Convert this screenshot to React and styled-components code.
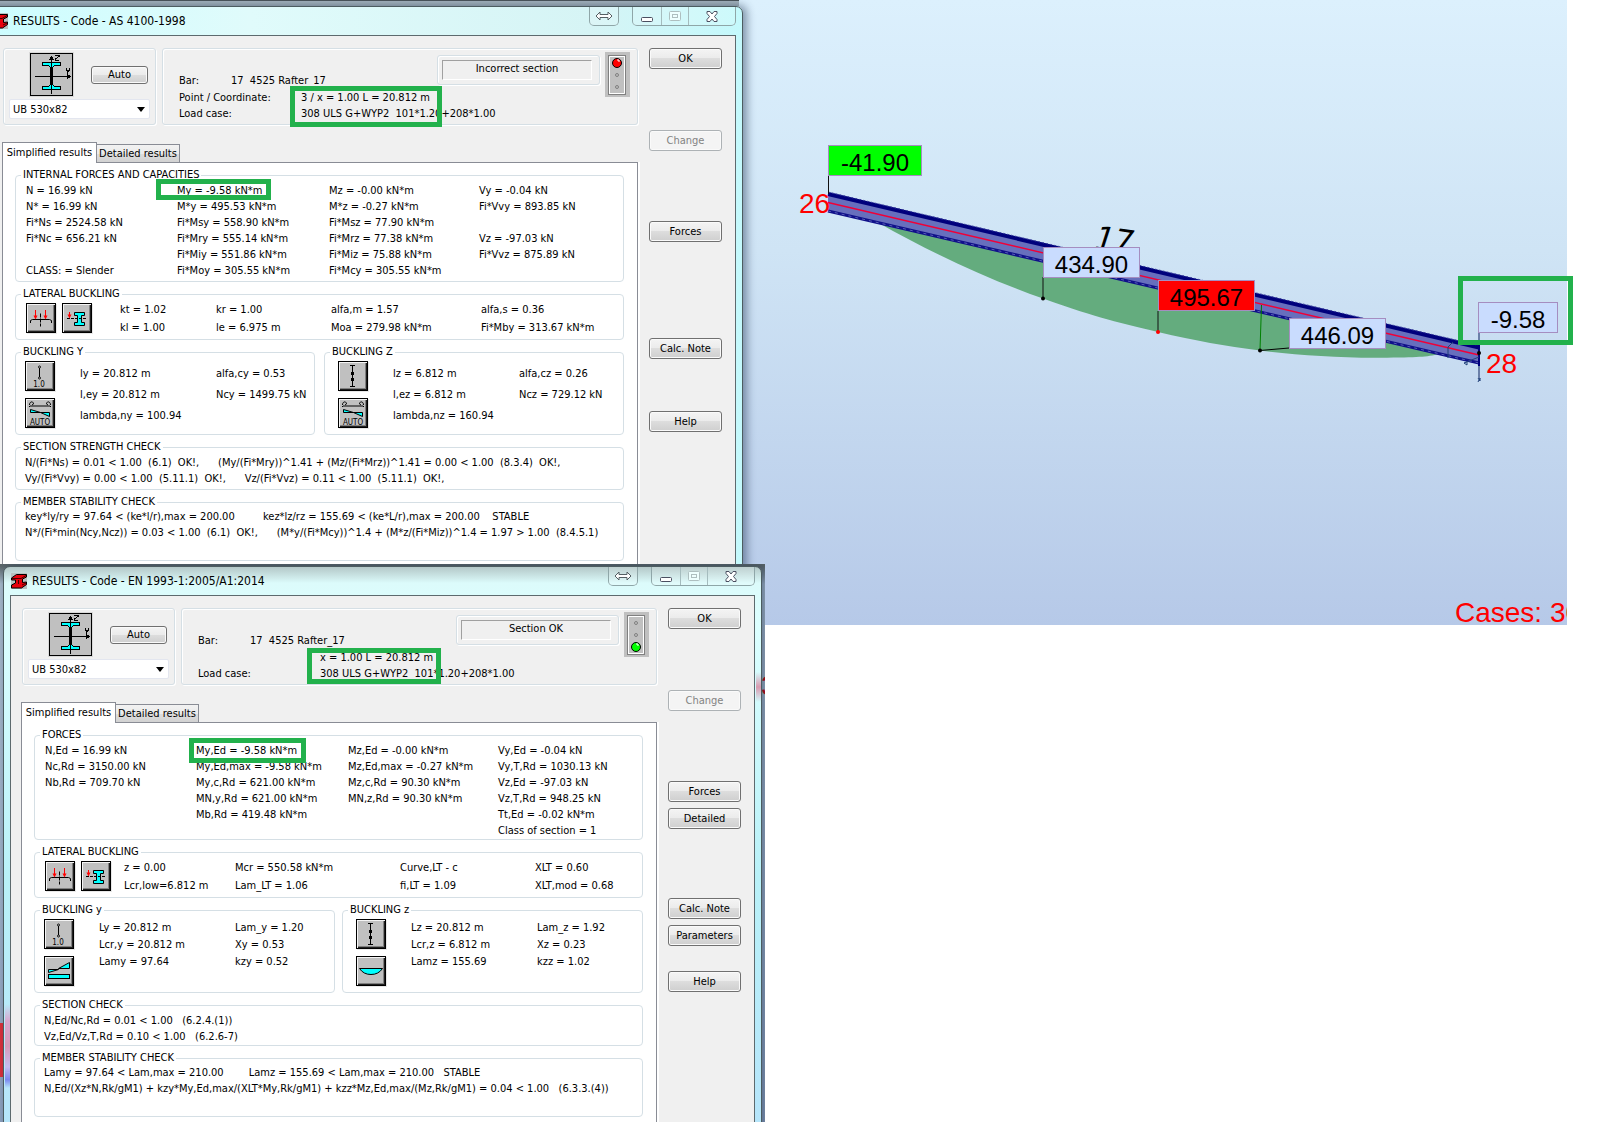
import React from "react";
import styled, { createGlobalStyle, css } from "styled-components";

const GlobalStyle = createGlobalStyle`
  *, *::before, *::after { box-sizing: border-box; }
  body { margin: 0; background: #fff; }
`;

const dialogFont = css`
  font-family: "DejaVu Sans Condensed", "DejaVu Sans", sans-serif;
  font-size: 11px;
  line-height: 16px;
  color: #000;
`;

/* ---------- canvas ---------- */

const Page = styled.main`
  ${dialogFont}
  position: relative;
  height: 100vh;
  overflow: hidden;
  white-space: pre;
`;

const UpperCapture = styled.section`
  position: absolute;
  top: 0;
  left: 0;
  right: 33px;
  height: 625px;
  overflow: hidden;
  background: linear-gradient(#dcf0fd, #cfe4f5 40%, #b6c9e8);
`;

const LowerCapture = styled.section`
  position: absolute;
  top: 564px;
  bottom: 0;
  left: 0;
  width: 765px;
  overflow: hidden;
  background: linear-gradient(#5b6669 2px, #a9bccd 20px, #9fb2c9 60%, #8fa3c0);
`;

const BehindStrip = styled.div`
  width: 739px;
  height: 6px;
  border-top: 1px solid #4b555a;
  background: #a7b6bf;
`;

const RedGlow = styled.div`
  position: absolute;
  left: ${(p) => p.$x}px;
  top: ${(p) => p.$y}px;
  width: ${(p) => p.$w}px;
  height: ${(p) => p.$h}px;
  background: ${(p) => p.$bg};
`;

const HiddenNode = styled.span`
  position: absolute;
  left: 761px;
  top: 108px;
  font: 28px/28px "Liberation Sans", Arial, sans-serif;
  color: #c8000a;
`;

const Highlight = styled.div`
  position: absolute;
  left: ${(p) => p.$x}px;
  top: ${(p) => p.$y}px;
  width: ${(p) => p.$w}px;
  height: ${(p) => p.$h}px;
  border: 5px solid #22b14c;
  pointer-events: none;
`;

/* ---------- window chrome ---------- */

const Window = styled.article`
  position: absolute;
  left: ${(p) => p.$x}px;
  top: ${(p) => p.$y}px;
  width: 759px;
  min-height: 620px;
  display: flex;
  flex-direction: column;
  padding: 0 6px;
  border: 1px solid #4c5c60;
  border-radius: 7px 7px 0 0;
  background: ${(p) =>
    p.$dim
      ? "linear-gradient(#b4c8c8, #dcfbfb 16px, #dcffff 60px, #b9f1f8 50%, #b5e2fb)"
      : "linear-gradient(90deg, #ccfdff, #e0fbfb 35%, #d6f4f5 80%, #c4f9fc)"};
  box-shadow: 3px 0 9px 1px rgba(20, 40, 70, 0.45);
`;

const TitleBar = styled.header`
  display: flex;
  align-items: flex-start;
  height: 28px;
  padding-left: 1px;
`;

const Title = styled.h1`
  flex: 1;
  margin: 0;
  padding: 6px 0 0 5px;
  font-size: 12px;
  line-height: 17px;
  font-weight: 400;
`;

const TitleIcon = styled.svg`
  margin-top: 6px;
`;

const CaptionGroup = styled.div`
  display: flex;
  height: 19px;
  margin-left: 13px;
  border: 1px solid #8fa6a8;
  border-top: 0;
  border-radius: 0 0 5px 5px;
`;

const CaptionButton = styled.button`
  display: grid;
  place-items: center;
  width: ${(p) => p.$w}px;
  padding: 0;
  border: 0;
  background: rgba(255, 255, 255, 0.15);
  & + & {
    border-left: 1px solid #a5bcbe;
  }
`;

const Client = styled.div`
  flex: 1;
  display: flex;
  gap: 11px;
  padding: 12px 0 0 10px;
  border: 1px solid #5d6a6e;
  border-bottom: 0;
  background: #f0f0f0;
`;

const MainColumn = styled.div`
  flex: 0 0 636px;
  display: flex;
  flex-direction: column;
`;

const SideColumn = styled.div`
  display: flex;
  flex-direction: column;
`;

const PushButton = styled.button`
  ${dialogFont}
  width: ${(p) => p.$w || 73}px;
  height: ${(p) => p.$h || 21}px;
  margin-top: ${(p) => p.$gap || 0}px;
  padding: 0;
  border: 1px solid #707070;
  border-radius: 3px;
  background: linear-gradient(#f4f4f4, #ebebeb 49%, #dddddd 50%, #cfcfcf);
  box-shadow: inset 0 0 0 1px #fafafa;
  &:disabled {
    color: #838383;
    border-color: #adb2b5;
    background: #f4f4f4;
  }
`;

/* ---------- header groups ---------- */

const HeaderRow = styled.div`
  display: flex;
  gap: 6px;
  height: 77px;
  margin-left: 1px;
`;

const Box = styled.div`
  border: 1px solid #d5dfe5;
  border-radius: 3px;
  box-shadow: inset 1px 1px 0 #fff, 1px 1px 0 #fff;
`;

const SectionBox = styled(Box)`
  flex: 0 0 153px;
  display: flex;
  flex-direction: column;
  gap: 2px;
  padding: 3px 5px 5px;
`;

const SectionTop = styled.div`
  display: flex;
  align-items: center;
  gap: 17px;
  padding-left: 20px;
`;

const SelectWrap = styled.label`
  position: relative;
  display: block;
  svg {
    position: absolute;
    right: 5px;
    top: 8px;
    pointer-events: none;
  }
`;

const Select = styled.select`
  ${dialogFont}
  appearance: none;
  width: 100%;
  height: 20px;
  padding: 1px 3px 0;
  border: 1px solid #e3e6ef;
  border-radius: 2px;
  background: #fff;
`;

const InfoBox = styled(Box)`
  flex: 1;
  display: grid;
  grid-template-columns: 52px 70px 136px 168px 25px;
  grid-template-rows: 37px 17px 16px;
  padding: 3px 0 0 16px;
`;

const InfoCell = styled.span`
  grid-column: ${(p) => p.$col};
  grid-row: ${(p) => p.$row};
  align-self: end;
`;

const StatusBox = styled(Box)`
  grid-column: 4;
  grid-row: 1;
  height: 30px;
  margin: 3px 5px 0 0;
  padding: 4px 7px 4px 4px;
`;

const Status = styled.output`
  display: block;
  height: 20px;
  border: 1px solid #a0a0a0;
  border-right-color: #fff;
  border-bottom-color: #fff;
  text-align: center;
`;

const Traffic = styled.svg`
  grid-column: 5;
  grid-row: 1 / 3;
`;

/* ---------- tabs and groups ---------- */

const TabList = styled.div`
  display: flex;
  align-items: flex-end;
  height: 20px;
  margin-top: 17px;
`;

const Tab = styled.button`
  ${dialogFont}
  position: relative;
  padding: 0;
  border: 1px solid #898c95;
  background: ${(p) => (p.$active ? "#fff" : "linear-gradient(#f2f2f2, #ebebeb 50%, #dddddd 51%, #d2d2d2)")};
  width: ${(p) => (p.$active ? 95 : 83)}px;
  height: ${(p) => (p.$active ? 21 : 18)}px;
  margin-bottom: ${(p) => (p.$active ? -1 : 0)}px;
  border-bottom: 0;
  ${(p) => !p.$active && "border-left: 0;"}
`;

const TabPanel = styled.div`
  flex: 1;
  display: flex;
  flex-direction: column;
  gap: 5px;
  padding: 5px 13px 0 12px;
  border: 1px solid #898c95;
  border-bottom: 0;
  background: #fff;
  box-shadow: 2px 0 0 #fff;
`;

const Group = styled.fieldset`
  min-width: 0;
  min-height: ${(p) => p.$h}px;
  margin: 0;
  padding: 0 0 0 ${(p) => p.$pad || 10}px;
  border: 1px solid #d5dfe5;
  border-radius: 4px;
`;

const Legend = styled.legend`
  margin-left: ${(p) => 5 - (p.$pad || 10)}px;
  padding: 0 2px;
  line-height: 14px;
`;

const Pair = styled.div`
  display: grid;
  grid-template-columns: repeat(2, minmax(0, 1fr));
  gap: ${(p) => p.$gap}px;
`;

const Columns = styled.div`
  display: grid;
  grid-template-columns: ${(p) => p.$cols};
  line-height: ${(p) => p.$line || 16}px;
  padding-top: ${(p) => p.$top || 0}px;
`;

const Column = styled.div`
  display: flex;
  flex-direction: column;
  padding-top: ${(p) => p.$top || 0}px;
`;

const Value = styled.span`
  height: ${(p) => p.$line || 16}px;
`;

const IconSet = styled.div`
  display: flex;
  flex-direction: ${(p) => (p.$stack ? "column" : "row")};
  gap: ${(p) => (p.$stack ? 7 : 6)}px;
  padding-top: 2px;
`;

const IconButton = styled.button`
  width: 30px;
  height: 30px;
  padding: 0;
  border: 1px solid #000;
  background: #c0c0c0;
  box-shadow: inset 1px 1px 0 #f4f4f4, inset -1px -1px 0 #202020, inset -2px -2px 0 #808080, 1px 1px 0 #e8e8e8;
  svg {
    display: block;
  }
`;

/* ---------- drawings ---------- */

const SectionBitmap = () => (
  <svg width="45" height="45" viewBox="0 0 45 45" shapeRendering="crispEdges">
    <rect width="45" height="45" fill="#d9d9d9" />
    <rect x="1.500" y="1.500" width="42" height="42" fill="#c0c0c0" stroke="#000" />
    <path d="M13.500 10.500h18v3h-6l-2 2v17l2 2h6v3h-18v-3h6l2-2v-17l-2-2h-6z" fill="#00ffff" stroke="#000" />
    <path d="M22.500 5v37M6 24.500h34" stroke="#000" fill="none" />
    <path d="M20 8l2-4h1l2 4zM38 22l4 2v1l-4 2z" fill="#000" />
    <path d="M26 3.500h4v1l-4 3v1h4M37.500 16v2l1.500 2l1.500-2v-2M39 20l-1 3" stroke="#000" fill="none" />
  </svg>
);

const BeamIcon = () => (
  <TitleIcon width="16" height="16" viewBox="0 0 16 16">
    <rect width="16" height="16" fill="#b8c0c0" />
    <path d="M0.500 5l5-3.500h10v2.500l-4 2v3.500l4-0.500v2.500l-5 3.500h-10v-3l4-2v-3h-4z" fill="#e8000c" stroke="#000" />
    <path d="M1 5.500h9l5-3M7.500 7v4M11 12l4-2" stroke="#400" fill="none" />
  </TitleIcon>
);

const LightStack = ({ ok }) => (
  <Traffic width="25" height="45" viewBox="0 0 25 45">
    <rect width="25" height="45" fill="#c0c0c0" />
    <rect x="3.500" y="3.500" width="17" height="39" fill="#c0c0c0" stroke="#808080" />
    <path d="M4.500 42V4.500H20" stroke="#fff" fill="none" />
    <path d="M5 41.500h14.500V5" stroke="#fff" fill="none" />
    {[11, 23, 35].map((y, i) => {
      const lit = ok ? i === 2 : i === 0;
      return lit ? (
        <g key={y}>
          <circle cx="12" cy={y} r="4.500" fill={ok ? "#00ff00" : "#ff0000"} stroke="#000" />
          <path d={`M12 ${y - 3}h2v2`} stroke="#fff" fill="none" />
        </g>
      ) : (
        <circle key={y} cx="12" cy={y} r="1.500" fill="none" stroke="#808080" />
      );
    })}
  </Traffic>
);

const glyphs = {
  load: (
    <>
      <path d="M3.500 19v-2.500l2-1h17l2 1v2.500" stroke="#000" fill="none" />
      <path d="M13.500 9.500v13" stroke="#000" strokeDasharray="4 1" fill="none" />
      <path d="M8.500 6v8M18.500 6v8" stroke="#f00" fill="none" />
      <path d="M6.500 11.500h4l-2 4zM16.500 11.500h4l-2 4z" fill="#f00" />
    </>
  ),
  beam: (
    <>
      <path d="M11.500 8.500h10v3h-3v7h3v3h-10v-3h3v-7h-3z" fill="#00ffff" stroke="#000" />
      <path d="M4 14.500h20" stroke="#000" strokeDasharray="3 1" fill="none" />
      <path d="M6.500 8v5" stroke="#f00" fill="none" />
      <path d="M4.500 10.500h4l-2 4z" fill="#f00" />
    </>
  ),
  unit: (
    <>
      <path d="M13.500 6v10" stroke="#000" />
      <circle cx="13.500" cy="5" r="1" fill="#fff" stroke="#000" />
      <circle cx="13.500" cy="16" r="1" fill="#fff" stroke="#000" />
      <text x="13" y="25" fontSize="8" textAnchor="middle" fontFamily="DejaVu Sans Condensed, sans-serif">1.0</text>
    </>
  ),
  chain: (
    <>
      <path d="M13.500 3v22M11 3.500h5M11 24.500h5" stroke="#000" fill="none" />
      <path d="M12 10h3v3h-3zM12 16h3v3h-3z" fill="#000" />
    </>
  ),
  auto: (
    <>
      <path d="M3.500 6c0-4 4-4 4-1l-1.500 1M24.500 6c0-4-4-4-4-1l1.500 1M3 8l1-1h20l1 1" stroke="#000" fill="none" />
      <path d="M4.500 10.500v3h10zM14.500 13.500l9 4v-4z" fill="#00ffff" stroke="#000" />
      <text x="14" y="26" fontSize="8" textAnchor="middle" fontFamily="DejaVu Sans Condensed, sans-serif">AUTO</text>
    </>
  ),
  wedge: (
    <>
      <path d="M3.500 15.500v-3h10zM13.500 11.500l11-6v6z" fill="#00ffff" stroke="#000" />
      <rect x="3.500" y="17.500" width="21" height="4" fill="#00ffff" stroke="#000" />
    </>
  ),
  bowl: <path d="M2.500 11.500h23q-4 6-11.500 6t-11.500-6z" fill="#00ffff" stroke="#000" />,
};

const ToolIcon = ({ name, label }) => (
  <IconButton type="button" aria-label={label}>
    <svg width="28" height="28" viewBox="0 0 28 28">
      {glyphs[name]}
    </svg>
  </IconButton>
);

/* ---------- dialog ---------- */

const Cells = ({ columns, line, top }) =>
  columns.map((values, i) => (
    <Column key={i} $top={top}>
      {values.map((v, j) => (
        <Value key={j} $line={line}>{v}</Value>
      ))}
    </Column>
  ));

function Buckling({ data, line, top, pad, cols }) {
  return (
    <Group $h={90} $pad={pad}>
      <Legend $pad={pad}>{data.title}</Legend>
      <Columns $cols={cols} $line={line}>
        <IconSet $stack>
          <ToolIcon name={data.icons[0]} label="Buckling length" />
          <ToolIcon name={data.icons[1]} label="Load type" />
        </IconSet>
        <Cells columns={data.columns} line={line} top={top} />
      </Columns>
    </Group>
  );
}

function ResultsDialog({ x, y, dim, d }) {
  return (
    <Window $x={x} $y={y} $dim={dim}>
      <TitleBar>
        <BeamIcon />
        <Title>{d.title}</Title>
        <CaptionGroup>
          <CaptionButton $w={28} type="button" aria-label="Expand">
            <svg width="18" height="10" viewBox="0 0 18 10">
              <path d="M1 5l4-4v2.500h8V1l4 4l-4 4V6.500H5V9z" fill="#fff" stroke="#555f63" />
            </svg>
          </CaptionButton>
        </CaptionGroup>
        <CaptionGroup>
          <CaptionButton $w={28} type="button" aria-label="Minimize">
            <svg width="12" height="12" viewBox="0 0 12 12">
              <rect x="0.500" y="7.500" width="11" height="4" rx="1" fill="#fff" stroke="#4b4f60" />
            </svg>
          </CaptionButton>
          <CaptionButton $w={27} type="button" aria-label="Maximize" disabled>
            <svg width="12" height="10" viewBox="0 0 12 10">
              <rect x="0.500" y="0.500" width="11" height="9" rx="1" fill="#eff" stroke="#aebfc0" />
              <rect x="3.500" y="3.500" width="5" height="3" fill="none" stroke="#aebfc0" />
            </svg>
          </CaptionButton>
          <CaptionButton $w={47} type="button" aria-label="Close">
            <svg width="12" height="11" viewBox="0 0 12 11">
              <path d="M1 0.500h3l2 2.500l2-2.500h3v2l-2.500 3l2.500 3v2h-3l-2-2.500l-2 2.500h-3v-2l2.500-3l-2.500-3z" fill="#fff" stroke="#4b4f60" />
            </svg>
          </CaptionButton>
        </CaptionGroup>
      </TitleBar>
      <Client>
        <MainColumn>
          <HeaderRow>
            <SectionBox>
              <SectionTop>
                <SectionBitmap />
                <PushButton type="button" $w={57} $h={18}>Auto</PushButton>
              </SectionTop>
              <SelectWrap>
                <Select aria-label="Section" defaultValue="UB 530x82">
                  <option>UB 530x82</option>
                </Select>
                <svg width="8" height="5" viewBox="0 0 8 5">
                  <path d="M0 0h8L4 5z" fill="#000" />
                </svg>
              </SelectWrap>
            </SectionBox>
            <InfoBox>
              <InfoCell $col="1" $row="1">Bar:</InfoCell>
              <InfoCell $col="2 / 4" $row="1">17  4525 Rafter_17</InfoCell>
              <StatusBox>
                <Status>{d.status}</Status>
              </StatusBox>
              <LightStack ok={d.ok} />
              {d.pointLabel && <InfoCell $col="1 / 3" $row="2">{d.pointLabel}</InfoCell>}
              <InfoCell $col="3 / 5" $row="2">{d.point}</InfoCell>
              <InfoCell $col="1 / 3" $row="3">Load case:</InfoCell>
              <InfoCell $col="3 / 5" $row="3">308 ULS G+WYP2  101*1.20+208*1.00</InfoCell>
            </InfoBox>
          </HeaderRow>
          <TabList role="tablist">
            <Tab type="button" role="tab" aria-selected="true" $active>Simplified results</Tab>
            <Tab type="button" role="tab" aria-selected="false">Detailed results</Tab>
          </TabList>
          <TabPanel role="tabpanel">
            <Group $h={d.heights.forces}>
              <Legend>{d.forces.title}</Legend>
              <Columns $cols="151px 152px 150px 1fr" $top={1}>
                <Cells columns={d.forces.columns} />
              </Columns>
            </Group>
            <Group $h={53}>
              <Legend>LATERAL BUCKLING</Legend>
              <Columns $cols={d.lateral.cols} $line={18}>
                <IconSet>
                  <ToolIcon name="load" label="Lateral buckling type" />
                  <ToolIcon name="beam" label="Load level" />
                </IconSet>
                <Cells columns={d.lateral.columns} line={18} />
              </Columns>
            </Group>
            <Pair $gap={d.pairGap}>
              <Buckling data={d.buckY} line={d.buckLine} top={d.buckTop} pad={9} cols="55px 136px 1fr" />
              <Buckling data={d.buckZ} line={d.buckLine} top={d.buckTop} pad={13} cols="55px 126px 1fr" />
            </Pair>
            <Group $h={d.heights.section} $pad={9}>
              <Legend $pad={9}>{d.section.title}</Legend>
              <Columns $cols="1fr" $top={1}>
                <Cells columns={[d.section.lines]} />
              </Columns>
            </Group>
            <Group $h={66} $pad={9}>
              <Legend $pad={9}>MEMBER STABILITY CHECK</Legend>
              <Columns $cols="1fr">
                <Cells columns={[d.member]} />
              </Columns>
            </Group>
          </TabPanel>
        </MainColumn>
        <SideColumn>
          {d.buttons.map(([label, gap]) => (
            <PushButton key={label} type="button" $gap={gap} disabled={label === "Change"}>
              {label}
            </PushButton>
          ))}
        </SideColumn>
      </Client>
    </Window>
  );
}

const australian = {
  title: "RESULTS - Code - AS 4100-1998",
  status: "Incorrect section",
  ok: false,
  pointLabel: "Point / Coordinate:",
  point: "3 / x = 1.00 L = 20.812 m",
  heights: { forces: 114, section: 50 },
  forces: {
    title: "INTERNAL FORCES AND CAPACITIES",
    columns: [
      ["N = 16.99 kN", "N* = 16.99 kN", "Fi*Ns = 2524.58 kN", "Fi*Nc = 656.21 kN", "", "CLASS: = Slender"],
      ["My = -9.58 kN*m", "M*y = 495.53 kN*m", "Fi*Msy = 558.90 kN*m", "Fi*Mry = 555.14 kN*m", "Fi*Miy = 551.86 kN*m", "Fi*Moy = 305.55 kN*m"],
      ["Mz = -0.00 kN*m", "M*z = -0.27 kN*m", "Fi*Msz = 77.90 kN*m", "Fi*Mrz = 77.38 kN*m", "Fi*Miz = 75.88 kN*m", "Fi*Mcy = 305.55 kN*m"],
      ["Vy = -0.04 kN", "Fi*Vvy = 893.85 kN", "", "Vz = -97.03 kN", "Fi*Vvz = 875.89 kN"],
    ],
  },
  lateral: {
    cols: "94px 96px 115px 150px 1fr",
    columns: [
      ["kt = 1.02", "kl = 1.00"],
      ["kr = 1.00", "le = 6.975 m"],
      ["alfa,m = 1.57", "Moa = 279.98 kN*m"],
      ["alfa,s = 0.36", "Fi*Mby = 313.67 kN*m"],
    ],
  },
  pairGap: 9,
  buckLine: 21,
  buckTop: 4,
  buckY: {
    title: "BUCKLING Y",
    icons: ["unit", "auto"],
    columns: [["ly = 20.812 m", "l,ey = 20.812 m", "lambda,ny = 100.94"], ["alfa,cy = 0.53", "Ncy = 1499.75 kN"]],
  },
  buckZ: {
    title: "BUCKLING Z",
    icons: ["chain", "auto"],
    columns: [["lz = 6.812 m", "l,ez = 6.812 m", "lambda,nz = 160.94"], ["alfa,cz = 0.26", "Ncz = 729.12 kN"]],
  },
  section: {
    title: "SECTION STRENGTH CHECK",
    lines: [
      "N/(Fi*Ns) = 0.01 < 1.00  (6.1)  OK!,      (My/(Fi*Mry))^1.41 + (Mz/(Fi*Mrz))^1.41 = 0.00 < 1.00  (8.3.4)  OK!,",
      "Vy/(Fi*Vvy) = 0.00 < 1.00  (5.11.1)  OK!,      Vz/(Fi*Vvz) = 0.11 < 1.00  (5.11.1)  OK!,",
    ],
  },
  member: [
    "key*ly/ry = 97.64 < (ke*l/r),max = 200.00         kez*lz/rz = 155.69 < (ke*L/r),max = 200.00    STABLE",
    "N*/(Fi*min(Ncy,Ncz)) = 0.03 < 1.00  (6.1)  OK!,      (M*y/(Fi*Mcy))^1.4 + (M*z/(Fi*Miz))^1.4 = 1.97 > 1.00  (8.4.5.1)",
  ],
  buttons: [["OK", 0], ["Change", 61], ["Forces", 70], ["Calc. Note", 96], ["Help", 52]],
};

const european = {
  title: "RESULTS - Code - EN 1993-1:2005/A1:2014",
  status: "Section OK",
  ok: true,
  point: "x = 1.00 L = 20.812 m",
  heights: { forces: 112, section: 48 },
  forces: {
    title: "FORCES",
    columns: [
      ["N,Ed = 16.99 kN", "Nc,Rd = 3150.00 kN", "Nb,Rd = 709.70 kN"],
      ["My,Ed = -9.58 kN*m", "My,Ed,max = -9.58 kN*m", "My,c,Rd = 621.00 kN*m", "MN,y,Rd = 621.00 kN*m", "Mb,Rd = 419.48 kN*m"],
      ["Mz,Ed = -0.00 kN*m", "Mz,Ed,max = -0.27 kN*m", "Mz,c,Rd = 90.30 kN*m", "MN,z,Rd = 90.30 kN*m"],
      ["Vy,Ed = -0.04 kN", "Vy,T,Rd = 1030.13 kN", "Vz,Ed = -97.03 kN", "Vz,T,Rd = 948.25 kN", "Tt,Ed = -0.02 kN*m", "Class of section = 1"],
    ],
  },
  lateral: {
    cols: "79px 111px 165px 135px 1fr",
    columns: [
      ["z = 0.00", "Lcr,low=6.812 m"],
      ["Mcr = 550.58 kN*m", "Lam_LT = 1.06"],
      ["Curve,LT - c", "fi,LT = 1.09"],
      ["XLT = 0.60", "XLT,mod = 0.68"],
    ],
  },
  pairGap: 7,
  buckLine: 17,
  buckTop: 2,
  buckY: {
    title: "BUCKLING y",
    icons: ["unit", "wedge"],
    columns: [["Ly = 20.812 m", "Lcr,y = 20.812 m", "Lamy = 97.64"], ["Lam_y = 1.20", "Xy = 0.53", "kzy = 0.52"]],
  },
  buckZ: {
    title: "BUCKLING z",
    icons: ["chain", "bowl"],
    columns: [["Lz = 20.812 m", "Lcr,z = 6.812 m", "Lamz = 155.69"], ["Lam_z = 1.92", "Xz = 0.23", "kzz = 1.02"]],
  },
  section: {
    title: "SECTION CHECK",
    lines: ["N,Ed/Nc,Rd = 0.01 < 1.00   (6.2.4.(1))", "Vz,Ed/Vz,T,Rd = 0.10 < 1.00   (6.2.6-7)"],
  },
  member: [
    "Lamy = 97.64 < Lam,max = 210.00        Lamz = 155.69 < Lam,max = 210.00   STABLE",
    "N,Ed/(Xz*N,Rk/gM1) + kzy*My,Ed,max/(XLT*My,Rk/gM1) + kzz*Mz,Ed,max/(Mz,Rk/gM1) = 0.04 < 1.00   (6.3.3.(4))",
  ],
  buttons: [["OK", 0], ["Change", 61], ["Forces", 70], ["Detailed", 6], ["Calc. Note", 69], ["Parameters", 6], ["Help", 25]],
};

/* ---------- model view ---------- */

const ModelDrawing = styled.svg`
  position: absolute;
  left: 780px;
  top: 120px;
`;

const ForceLabel = styled.span`
  position: absolute;
  left: ${(p) => p.$x}px;
  top: ${(p) => p.$y}px;
  width: ${(p) => p.$w || 97}px;
  height: 31px;
  padding-top: 3px;
  border: 1px solid #a58dc0;
  background: ${(p) => p.$bg || "#c9dcfe"};
  font: 24px/28px "Liberation Sans", Arial, sans-serif;
  text-align: center;
`;

const NodeLabel = styled.span`
  position: absolute;
  left: ${(p) => p.$x}px;
  top: ${(p) => p.$y}px;
  font: 28px/32px "Liberation Sans", Arial, sans-serif;
  color: #ff0000;
`;

function ModelView() {
  return (
    <>
      <ModelDrawing width="740" height="290" viewBox="780 120 740 290">
        <path
          d="M877 222C930 252 985 278 1043 298.600S1120 323 1158 332S1225 346 1260 350.500S1340 358 1380 357.700S1425 357 1440 354z"
          fill="#64ac7e"
        />
        <path d="M828 192L1479 345.500V364L828 211.500z" fill="#676fbd" />
        <path d="M828 194L1479 347.500" stroke="#00007c" strokeWidth="4" fill="none" />
        <path d="M828 192L1479 345.500" stroke="#3a409c" strokeWidth="1" strokeDasharray="2 2" fill="none" />
        <path d="M828 211L1479 363" stroke="#10108a" strokeWidth="3" fill="none" />
        <path d="M828 211L1479 363" stroke="#5a60b8" strokeWidth="1" strokeDasharray="3 4" fill="none" />
        <path d="M828 202.500L1479 355" stroke="#f00038" strokeWidth="1.400" fill="none" />
        <path d="M828.500 176V194M1043 277V298M1158 311V331" stroke="#111" fill="none" />
        <path d="M1261.500 305L1260 350" stroke="#008000" fill="none" />
        <path d="M1260 350.500L1289 348" stroke="#000" fill="none" />
        <path d="M1479 332V345M1479 363V378" stroke="#6a7fa8" strokeWidth="2" fill="none" />
        <path d="M1479 345V366" stroke="#00007c" strokeWidth="2" fill="none" />
        <path d="M1453 342L1448 347V358M1479 357L1464 363l3 2v-4M1478 378l2 3v-3l-2 4" stroke="#1f3f78" fill="none" />
        <circle cx="1043" cy="298.500" r="2" />
        <circle cx="1158" cy="332" r="2" fill="#ff0000" />
        <circle cx="1260" cy="350.500" r="2" />
        <circle cx="1479" cy="353" r="2" />
        <text x="1094" y="249" fontSize="33" fontFamily="DejaVu Sans Condensed, sans-serif" fontStyle="oblique" transform="rotate(8 1094 249)">17</text>
      </ModelDrawing>
      <ForceLabel $x={828} $y={145} $w={94} $bg="#00ff00">-41.90</ForceLabel>
      <ForceLabel $x={1043} $y={247}>434.90</ForceLabel>
      <ForceLabel $x={1158} $y={280} $bg="#ff0000">495.67</ForceLabel>
      <ForceLabel $x={1289} $y={318}>446.09</ForceLabel>
      <ForceLabel $x={1478} $y={302} $w={80}>-9.58</ForceLabel>
      <NodeLabel $x={799} $y={188}>26</NodeLabel>
      <NodeLabel $x={1486} $y={348}>28</NodeLabel>
      <NodeLabel $x={1455} $y={597}>Cases: 308</NodeLabel>
    </>
  );
}

export default function App() {
  return (
    <Page>
      <GlobalStyle />
      <UpperCapture>
        <ModelView />
        <BehindStrip />
        <ResultsDialog x={-16} y={6} d={australian} />
      </UpperCapture>
      <LowerCapture>
        <HiddenNode>3</HiddenNode>
        <RedGlow $x={0} $y={459} $w={3} $h={54} $bg="#e0303a" />
        <ResultsDialog x={3} y={2} dim d={european} />
        <RedGlow $x={5} $y={440} $w={5} $h={84} $bg="linear-gradient(transparent, #d8a8d0 20%, #d89ab8 50%, #c4bdf0 75%, #7a88f0 90%, transparent)" />
        <RedGlow $x={756} $y={108} $w={5} $h={30} $bg="linear-gradient(transparent, #d99ab0 50%, transparent)" />
      </LowerCapture>
      <Highlight $x={290} $y={86} $w={152} $h={41} />
      <Highlight $x={156} $y={179} $w={115} $h={21} />
      <Highlight $x={307} $y={648} $w={134} $h={36} />
      <Highlight $x={189} $y={738} $w={117} $h={25} />
      <Highlight $x={1458} $y={276} $w={115} $h={69} />
    </Page>
  );
}
